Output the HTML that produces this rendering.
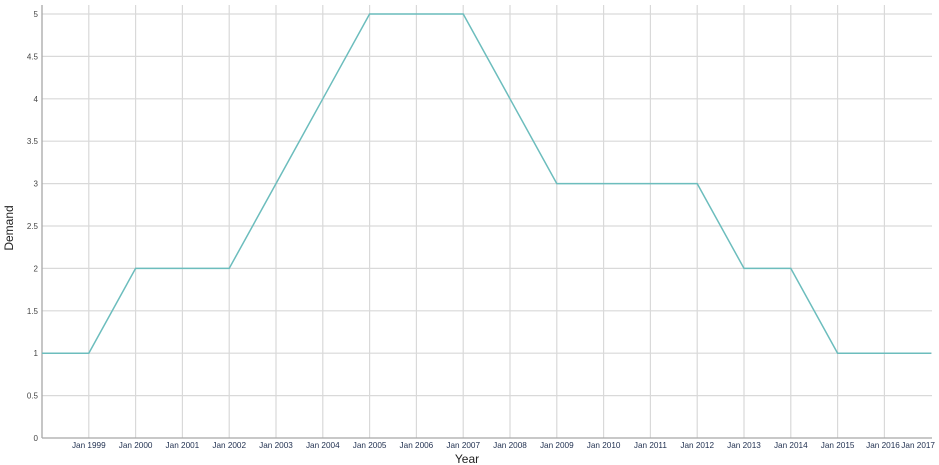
<!DOCTYPE html>
<html><head><style>html,body{margin:0;padding:0;background:#fff;}svg{display:block;font-family:"Liberation Sans",Arial,sans-serif;}</style></head>
<body>
<svg width="939" height="465" viewBox="0 0 939 465">
<g stroke="#d9d9d9" stroke-width="1.2">
<line x1="42" x2="932" y1="14" y2="14"/><line x1="42" x2="932" y1="56.4" y2="56.4"/><line x1="42" x2="932" y1="98.8" y2="98.8"/><line x1="42" x2="932" y1="141.2" y2="141.2"/><line x1="42" x2="932" y1="183.6" y2="183.6"/><line x1="42" x2="932" y1="226" y2="226"/><line x1="42" x2="932" y1="268.4" y2="268.4"/><line x1="42" x2="932" y1="310.8" y2="310.8"/><line x1="42" x2="932" y1="353.2" y2="353.2"/><line x1="42" x2="932" y1="395.6" y2="395.6"/>
<line x1="88.8" x2="88.8" y1="5" y2="438"/><line x1="135.6" x2="135.6" y1="5" y2="438"/><line x1="182.4" x2="182.4" y1="5" y2="438"/><line x1="229.2" x2="229.2" y1="5" y2="438"/><line x1="276" x2="276" y1="5" y2="438"/><line x1="322.8" x2="322.8" y1="5" y2="438"/><line x1="369.6" x2="369.6" y1="5" y2="438"/><line x1="416.4" x2="416.4" y1="5" y2="438"/><line x1="463.2" x2="463.2" y1="5" y2="438"/><line x1="510" x2="510" y1="5" y2="438"/><line x1="556.8" x2="556.8" y1="5" y2="438"/><line x1="603.6" x2="603.6" y1="5" y2="438"/><line x1="650.4" x2="650.4" y1="5" y2="438"/><line x1="697.2" x2="697.2" y1="5" y2="438"/><line x1="744" x2="744" y1="5" y2="438"/><line x1="790.8" x2="790.8" y1="5" y2="438"/><line x1="837.6" x2="837.6" y1="5" y2="438"/><line x1="884.4" x2="884.4" y1="5" y2="438"/>
</g>
<g stroke="#a8a8a8" stroke-width="1.3"><line x1="42" x2="42" y1="5" y2="438"/><line x1="42" x2="932" y1="438" y2="438"/></g>
<polyline fill="none" stroke="#6cbdbd" stroke-width="1.5" points="42,353.2 88.8,353.2 135.6,268.4 229.2,268.4 276,183.6 322.8,98.8 369.6,14 463.2,14 510,98.8 556.8,183.6 697.2,183.6 744,268.4 790.8,268.4 837.6,353.2 931.2,353.2"/>
<g font-size="8" fill="#444" text-anchor="end">
<text x="38" y="17">5</text><text x="38" y="59.4">4.5</text><text x="38" y="101.8">4</text><text x="38" y="144.2">3.5</text><text x="38" y="186.6">3</text><text x="38" y="229">2.5</text><text x="38" y="271.4">2</text><text x="38" y="313.8">1.5</text><text x="38" y="356.2">1</text><text x="38" y="398.6">0.5</text><text x="38" y="441">0</text>
</g>
<g font-size="8.2" fill="#1f2f4f" text-anchor="middle">
<text x="88.8" y="448">Jan 1999</text><text x="135.6" y="448">Jan 2000</text><text x="182.4" y="448">Jan 2001</text><text x="229.2" y="448">Jan 2002</text><text x="276" y="448">Jan 2003</text><text x="322.8" y="448">Jan 2004</text><text x="369.6" y="448">Jan 2005</text><text x="416.4" y="448">Jan 2006</text><text x="463.2" y="448">Jan 2007</text><text x="510" y="448">Jan 2008</text><text x="556.8" y="448">Jan 2009</text><text x="603.6" y="448">Jan 2010</text><text x="650.4" y="448">Jan 2011</text><text x="697.2" y="448">Jan 2012</text><text x="744" y="448">Jan 2013</text><text x="790.8" y="448">Jan 2014</text><text x="837.6" y="448">Jan 2015</text><text x="883" y="448">Jan 2016</text><text x="935" y="448" text-anchor="end">Jan 2017</text>
</g>
<text x="467" y="463" font-size="12" fill="#222" text-anchor="middle">Year</text>
<text transform="translate(13,228) rotate(-90)" font-size="12" fill="#222" text-anchor="middle">Demand</text>
</svg>
</body></html>
